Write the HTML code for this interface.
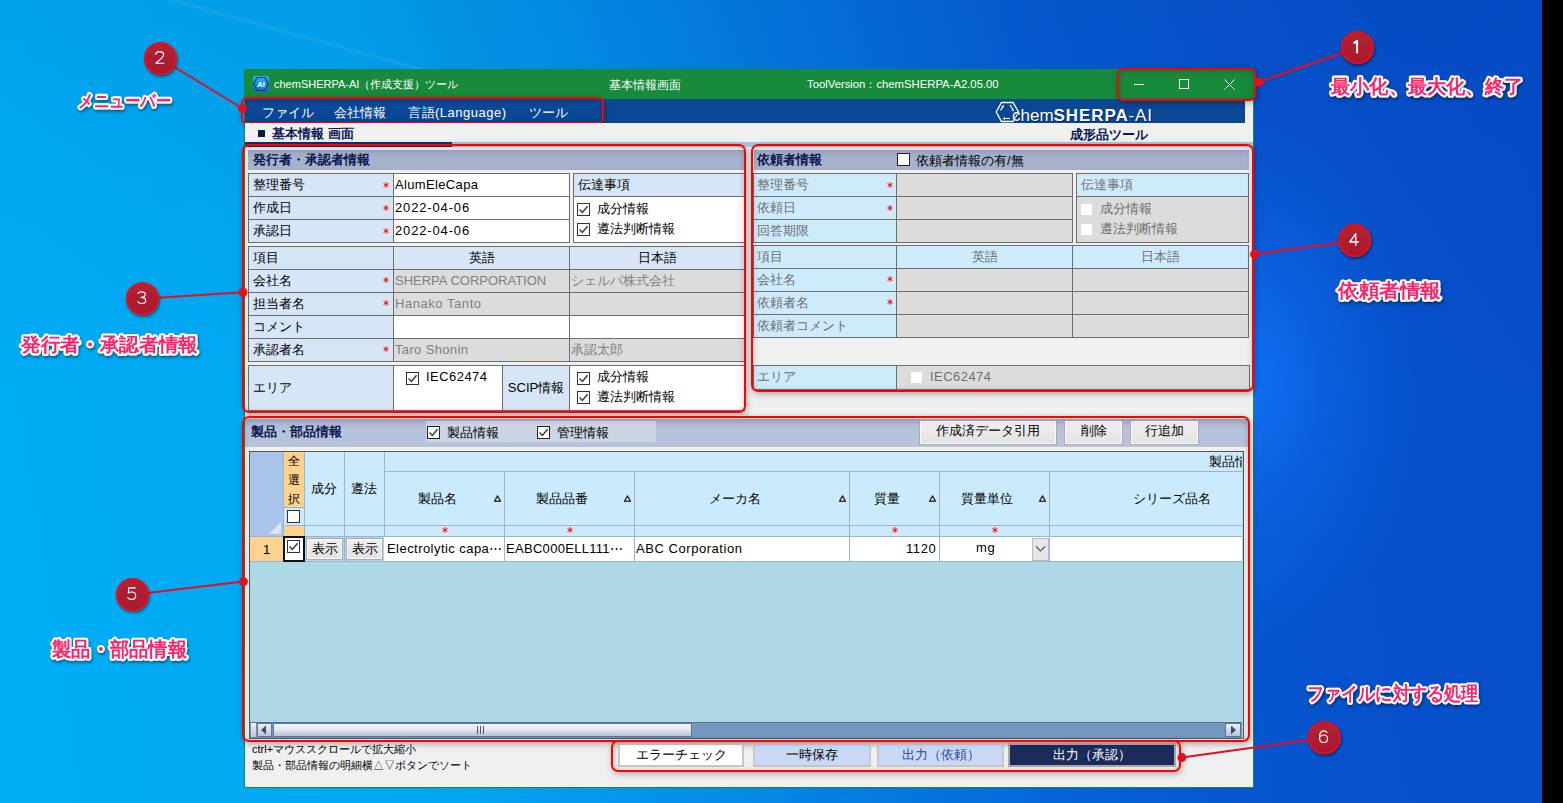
<!DOCTYPE html>
<html><head><meta charset="utf-8">
<style>
*{box-sizing:border-box;margin:0;padding:0}
html,body{width:1563px;height:803px;overflow:hidden}
body{position:relative;font-family:"Liberation Sans",sans-serif;font-size:13px;color:#000;
background:#0a8fe0}
.a{position:absolute}
#bg{left:0;top:0;width:1563px;height:803px;
background:
 radial-gradient(ellipse 170px 270px at 1250px 380px, rgba(20,120,255,.75), rgba(20,120,255,.25) 55%, rgba(20,120,255,0) 100%),
 linear-gradient(180deg, rgba(0,40,120,.08) 0px, rgba(0,40,120,0) 400px),
 linear-gradient(81deg,#00aef6 60px,#02a6f0 450px,#038fe8 700px,#0474de 920px,#065dd3 1120px,#0652cc 1330px,#054dc8 1669px);}
#ray{left:0;top:0;width:1563px;height:803px}
#blk{left:1542px;top:0;width:21px;height:803px;background:#000}
#win{left:244px;top:69px;width:1010px;height:719px;background:#f0f0f0;border:1px solid #178a3c;border-top:0}
#title{left:244px;top:69px;width:1010px;height:30px;background:#178a3c;color:#fff;font-size:12px}
#menu{left:245px;top:99px;width:1000px;height:24px;background:#0a4896;color:#fff}
.t{position:absolute;white-space:nowrap;line-height:1}
.rb{position:absolute;border:2px solid #f00;border-radius:7px;box-shadow:1px 2px 6px rgba(0,0,0,.3), inset 0 1px 6px rgba(0,0,0,.2)}
.hdr{position:absolute;height:20px;background:linear-gradient(#99a5c2,#a6b1cc 40%,#a6b1cc);color:#0a1850;font-weight:bold;font-size:13px}
.cell{position:absolute;border:1px solid #6e6e6e;overflow:hidden;white-space:nowrap;font-size:13px;line-height:21px}
.lb{background:#d6e6f6}
.lb2{background:#cdebfb;color:#707070}
.dis{background:#dcdcdc;color:#808080}
.wh{background:#fff}
.req{position:absolute;color:#e00;font-size:12px}
.cb{position:absolute;width:13px;height:13px;border:1px solid #333;background:#fff}
.cb.on::after{content:"";position:absolute;left:2px;top:0px;width:6px;height:3px;border-left:1.3px solid #444;border-bottom:1.3px solid #444;transform:translate(0,3px) rotate(-45deg)}
.cb.off{border-color:#ddd}

.btn{position:absolute;background:linear-gradient(#f0f0f0,#e2e2e2);border:1px solid #acacac;box-shadow:inset 0 0 0 1px #fafafa;text-align:center;font-size:13px;line-height:20px;white-space:nowrap}
.vl{position:absolute;width:1px;background:#9fb3cf}
.hl{position:absolute;height:1px;background:#9fb3cf}
.ht{position:absolute;top:491px;text-align:center;font-size:13px;line-height:16px;white-space:nowrap}
.tri{position:absolute;top:495px;width:0;height:0;border-left:4px solid transparent;border-right:4px solid transparent;border-bottom:7px solid #333}
.fb{position:absolute;border:2px solid #c8c8c8;text-align:center;font-size:13px;line-height:20px;white-space:nowrap}
</style></head><body>
<div id="bg" class="a"></div>
<svg id="ray" class="a" width="1563" height="803"><defs><filter id="rb"><feGaussianBlur stdDeviation="1.2"/></filter></defs><line x1="110" y1="-17" x2="700" y2="147" stroke="rgba(255,255,255,.09)" stroke-width="2.5" filter="url(#rb)"/></svg>
<div id="blk" class="a"></div>

<!-- window -->
<div id="win" class="a"></div>
<div id="title" class="a">
  <div class="a" style="left:9px;top:7px;width:16px;height:16px;background:linear-gradient(#27b4f0,#0a6fc0);border-radius:2px">
    <svg width="16" height="16" viewBox="0 0 16 16" style="position:absolute;left:0;top:0"><polygon points="4,1.5 12,1.5 15.3,8 12,14.5 4,14.5 0.7,8" fill="none" stroke="#0a3a70" stroke-width="1.2"/><text x="8" y="11" font-size="7.5" font-weight="bold" fill="#fff" text-anchor="middle" font-family="Liberation Sans">AI</text></svg>
  </div>
  <div class="t" style="left:30px;top:10px;font-size:11px">chemSHERPA-AI（作成支援）ツール</div>
  <div class="t" style="left:365px;top:10px;font-size:11.6px">基本情報画面</div>
  <div class="t" style="left:563px;top:10px;font-size:11.3px">ToolVersion：chemSHERPA-A2.05.00</div>
  <div class="a" style="left:890px;top:15px;width:10px;height:1px;background:#fff"></div>
  <div class="a" style="left:935px;top:10px;width:10px;height:10px;border:1px solid #fff"></div>
  <svg class="a" style="left:980px;top:10px" width="11" height="11"><path d="M0.5 0.5 L10.5 10.5 M10.5 0.5 L0.5 10.5" stroke="#fff" stroke-width="1"/></svg>
</div>
<div id="menu" class="a" style="font-size:13px">
  <div class="t" style="left:17px;top:7px">ファイル</div>
  <div class="t" style="left:89px;top:7px">会社情報</div>
  <div class="t" style="left:163px;top:7px;letter-spacing:0.5px">言語(Language)</div>
  <div class="t" style="left:284px;top:7px">ツール</div>
  <!-- logo -->
  <svg class="a" style="left:750px;top:2px" width="26" height="22" viewBox="0 0 26 22"><polygon points="6.5,1.5 18,1.5 23.5,11 18,20.5 6.5,20.5 1.2,11" fill="none" stroke="#fff" stroke-width="1.3"/><path d="M5.5 9.5 L8.5 4.5 M15 4 L18.5 9.5 M8 17.5 L15 17.5" stroke="#fff" stroke-width="1.2"/><path d="M6.3 5.8 L8.6 4.2 L8.4 7 Z M18.3 8 L18.6 10.5 L16.4 9.3 Z M7.5 17.5 L10 16 L10 19 Z" fill="#fff"/></svg>
  <div class="t" style="left:767px;top:8px;font-size:17px;text-shadow:1px 1px 1px rgba(0,0,40,.5)">chem<b style="letter-spacing:0.9px">SHERPA</b><span style="letter-spacing:0.8px">-AI</span></div>
</div>

<div class="rb" style="left:241px;top:97px;width:363px;height:27px;border-radius:6px"></div>
<div class="rb" style="left:1117px;top:68px;width:139px;height:33px;border-radius:6px"></div>
<!-- tab strip -->
<div class="a" style="left:245px;top:123px;width:1008px;height:19px;background:#f0f0f0"></div>
<div class="a" style="left:258px;top:130px;width:7px;height:7px;background:#0a1850"></div><div class="t" style="left:272px;top:127px;font-size:13px;font-weight:bold;color:#0a1850">基本情報 画面</div>
<div class="t" style="left:1070px;top:128px;font-size:13px;font-weight:bold;color:#0a1850">成形品ツール</div>
<div class="a" style="left:245px;top:142px;width:1008px;height:5px;background:#a9c6de"></div>
<div class="a" style="left:245px;top:142px;width:207px;height:5px;background:#0a3274"></div>


<!-- ===== Section 3: issuer ===== -->
<div class="hdr" style="left:248px;top:150px;width:497px;"><span class="t" style="left:5px;top:3px">発行者・承認者情報</span></div>
<!-- table 1 -->
<div class="cell lb" style="left:248px;top:173px;width:146px;height:24px;padding-left:4px">整理番号</div>
<div class="cell lb" style="left:248px;top:196px;width:146px;height:24px;padding-left:4px">作成日</div>
<div class="cell lb" style="left:248px;top:219px;width:146px;height:24px;padding-left:4px">承認日</div>
<svg class="a" style="left:382px;top:181px" width="8" height="8"><path d="M4 1.1V6.9M1.5 2.55L6.5 5.45M6.5 2.55L1.5 5.45" stroke="#f00" stroke-width="0.95"/></svg>
<svg class="a" style="left:382px;top:204px" width="8" height="8"><path d="M4 1.1V6.9M1.5 2.55L6.5 5.45M6.5 2.55L1.5 5.45" stroke="#f00" stroke-width="0.95"/></svg>
<svg class="a" style="left:382px;top:227px" width="8" height="8"><path d="M4 1.1V6.9M1.5 2.55L6.5 5.45M6.5 2.55L1.5 5.45" stroke="#f00" stroke-width="0.95"/></svg>
<div class="cell wh" style="left:393px;top:173px;width:177px;height:24px;padding-left:1px;letter-spacing:0.35px">AlumEleCapa</div>
<div class="cell wh" style="left:393px;top:196px;width:177px;height:24px;padding-left:1px;letter-spacing:0.85px">2022-04-06</div>
<div class="cell wh" style="left:393px;top:219px;width:177px;height:24px;padding-left:1px;letter-spacing:0.85px">2022-04-06</div>
<div class="cell lb" style="left:573px;top:173px;width:172px;height:24px;padding-left:4px">伝達事項</div>
<div class="cell wh" style="left:573px;top:196px;width:172px;height:47px"></div>
<div class="cb" style="left:577px;top:203px"><svg class="a" style="left:0;top:0" width="11" height="11"><path d="M1.6 5.4L4.3 8.4L9.6 2.3" fill="none" stroke="#333" stroke-width="1.4"/></svg></div><div class="t" style="left:597px;top:202px">成分情報</div>
<div class="cb" style="left:577px;top:223px"><svg class="a" style="left:0;top:0" width="11" height="11"><path d="M1.6 5.4L4.3 8.4L9.6 2.3" fill="none" stroke="#333" stroke-width="1.4"/></svg></div><div class="t" style="left:597px;top:222px">遵法判断情報</div>
<!-- table 2 -->
<div class="cell lb" style="left:248px;top:246px;width:146px;height:24px;padding-left:4px">項目</div>
<div class="cell lb" style="left:393px;top:246px;width:177px;height:24px;text-align:center;padding-left:0">英語</div>
<div class="cell lb" style="left:569px;top:246px;width:176px;height:24px;text-align:center">日本語</div>
<div class="cell lb" style="left:248px;top:269px;width:146px;height:24px;padding-left:4px">会社名</div>
<div class="cell lb" style="left:248px;top:292px;width:146px;height:24px;padding-left:4px">担当者名</div>
<div class="cell lb" style="left:248px;top:315px;width:146px;height:24px;padding-left:4px">コメント</div>
<div class="cell lb" style="left:248px;top:338px;width:146px;height:24px;padding-left:4px">承認者名</div>
<svg class="a" style="left:382px;top:276px" width="8" height="8"><path d="M4 1.1V6.9M1.5 2.55L6.5 5.45M6.5 2.55L1.5 5.45" stroke="#f00" stroke-width="0.95"/></svg>
<svg class="a" style="left:382px;top:299px" width="8" height="8"><path d="M4 1.1V6.9M1.5 2.55L6.5 5.45M6.5 2.55L1.5 5.45" stroke="#f00" stroke-width="0.95"/></svg>
<svg class="a" style="left:382px;top:345px" width="8" height="8"><path d="M4 1.1V6.9M1.5 2.55L6.5 5.45M6.5 2.55L1.5 5.45" stroke="#f00" stroke-width="0.95"/></svg>
<div class="cell dis" style="left:393px;top:269px;width:177px;height:24px;padding-left:1px">SHERPA CORPORATION</div>
<div class="cell dis" style="left:393px;top:292px;width:177px;height:24px;padding-left:1px;letter-spacing:0.55px">Hanako Tanto</div>
<div class="cell wh" style="left:393px;top:315px;width:177px;height:24px"></div>
<div class="cell dis" style="left:393px;top:338px;width:177px;height:24px;padding-left:1px;letter-spacing:0.35px">Taro Shonin</div>
<div class="cell dis" style="left:569px;top:269px;width:176px;height:24px;padding-left:1px">シェルパ株式会社</div>
<div class="cell dis" style="left:569px;top:292px;width:176px;height:24px"></div>
<div class="cell wh" style="left:569px;top:315px;width:176px;height:24px"></div>
<div class="cell dis" style="left:569px;top:338px;width:176px;height:24px;padding-left:1px">承認太郎</div>
<!-- area row -->
<div class="cell lb" style="left:248px;top:365px;width:146px;height:46px;padding-left:4px;line-height:44px">エリア</div>
<div class="cell wh" style="left:393px;top:365px;width:110px;height:46px"></div>
<div class="cb" style="left:406px;top:372px"><svg class="a" style="left:0;top:0" width="11" height="11"><path d="M1.6 5.4L4.3 8.4L9.6 2.3" fill="none" stroke="#333" stroke-width="1.4"/></svg></div><div class="t" style="left:426px;top:370px;letter-spacing:0.45px">IEC62474</div>
<div class="cell lb" style="left:502px;top:365px;width:68px;height:46px;line-height:44px;text-align:center">SCIP情報</div>
<div class="cell wh" style="left:569px;top:365px;width:176px;height:46px"></div>
<div class="cb" style="left:577px;top:372px"><svg class="a" style="left:0;top:0" width="11" height="11"><path d="M1.6 5.4L4.3 8.4L9.6 2.3" fill="none" stroke="#333" stroke-width="1.4"/></svg></div><div class="t" style="left:597px;top:370px">成分情報</div>
<div class="cb" style="left:577px;top:391px"><svg class="a" style="left:0;top:0" width="11" height="11"><path d="M1.6 5.4L4.3 8.4L9.6 2.3" fill="none" stroke="#333" stroke-width="1.4"/></svg></div><div class="t" style="left:597px;top:390px">遵法判断情報</div>
<div class="rb" style="left:242px;top:144px;width:504px;height:269px"></div>

<!-- ===== Section 4: requester ===== -->
<div class="hdr" style="left:754px;top:150px;width:495px;"><span class="t" style="left:3px;top:3px">依頼者情報</span>
  <div class="cb" style="left:143px;top:3px;border-color:#222"></div><span class="t" style="left:162px;top:4px;font-weight:normal;color:#000;font-size:13px">依頼者情報の有/無</span></div>
<div class="cell lb2" style="left:753px;top:173px;width:144px;height:24px;padding-left:3px">整理番号</div>
<div class="cell lb2" style="left:753px;top:196px;width:144px;height:24px;padding-left:3px">依頼日</div>
<div class="cell lb2" style="left:753px;top:219px;width:144px;height:24px;padding-left:3px">回答期限</div>
<svg class="a" style="left:886px;top:181px" width="8" height="8"><path d="M4 1.1V6.9M1.5 2.55L6.5 5.45M6.5 2.55L1.5 5.45" stroke="#f00" stroke-width="0.95"/></svg>
<svg class="a" style="left:886px;top:204px" width="8" height="8"><path d="M4 1.1V6.9M1.5 2.55L6.5 5.45M6.5 2.55L1.5 5.45" stroke="#f00" stroke-width="0.95"/></svg>
<div class="cell dis" style="left:896px;top:173px;width:177px;height:24px"></div>
<div class="cell dis" style="left:896px;top:196px;width:177px;height:24px"></div>
<div class="cell dis" style="left:896px;top:219px;width:177px;height:24px"></div>
<div class="cell lb2" style="left:1076px;top:173px;width:173px;height:24px;padding-left:4px">伝達事項</div>
<div class="cell dis" style="left:1076px;top:196px;width:173px;height:47px"></div>
<div class="cb off" style="left:1080px;top:203px"></div><div class="t" style="left:1100px;top:202px;color:#707070">成分情報</div>
<div class="cb off" style="left:1080px;top:223px"></div><div class="t" style="left:1100px;top:222px;color:#707070">遵法判断情報</div>
<div class="cell lb2" style="left:753px;top:245px;width:144px;height:24px;padding-left:3px">項目</div>
<div class="cell lb2" style="left:896px;top:245px;width:177px;height:24px;text-align:center">英語</div>
<div class="cell lb2" style="left:1072px;top:245px;width:177px;height:24px;text-align:center">日本語</div>
<div class="cell lb2" style="left:753px;top:268px;width:144px;height:24px;padding-left:3px">会社名</div>
<div class="cell lb2" style="left:753px;top:291px;width:144px;height:24px;padding-left:3px">依頼者名</div>
<div class="cell lb2" style="left:753px;top:314px;width:144px;height:24px;padding-left:3px">依頼者コメント</div>
<svg class="a" style="left:886px;top:275px" width="8" height="8"><path d="M4 1.1V6.9M1.5 2.55L6.5 5.45M6.5 2.55L1.5 5.45" stroke="#f00" stroke-width="0.95"/></svg>
<svg class="a" style="left:886px;top:298px" width="8" height="8"><path d="M4 1.1V6.9M1.5 2.55L6.5 5.45M6.5 2.55L1.5 5.45" stroke="#f00" stroke-width="0.95"/></svg>
<div class="cell dis" style="left:896px;top:268px;width:177px;height:24px"></div>
<div class="cell dis" style="left:896px;top:291px;width:177px;height:24px"></div>
<div class="cell dis" style="left:896px;top:314px;width:177px;height:24px"></div>
<div class="cell dis" style="left:1072px;top:268px;width:177px;height:24px"></div>
<div class="cell dis" style="left:1072px;top:291px;width:177px;height:24px"></div>
<div class="cell dis" style="left:1072px;top:314px;width:177px;height:24px"></div>
<div class="cell lb2" style="left:753px;top:365px;width:144px;height:25px;padding-left:3px">エリア</div>
<div class="cell dis" style="left:896px;top:365px;width:354px;height:25px"></div>
<div class="cb off" style="left:910px;top:371px"></div><div class="t" style="left:930px;top:370px;color:#707070;letter-spacing:0.45px">IEC62474</div>
<div class="rb" style="left:751px;top:144px;width:503px;height:248px"></div>


<!-- ===== Section 5: products ===== -->
<div class="a" style="left:245px;top:419px;width:1004px;height:28px;background:linear-gradient(#a4aec7,#b6c1da 35%,#b8c3dc)"></div>
<div class="t" style="left:251px;top:425px;font-size:13px;font-weight:bold;color:#0a1850">製品・部品情報</div>
<div class="a" style="left:426px;top:421px;width:230px;height:21px;background:#cdd4e4"></div>
<div class="cb" style="left:427px;top:426px;border-color:#222"><svg class="a" style="left:0;top:0" width="11" height="11"><path d="M1.6 5.4L4.3 8.4L9.6 2.3" fill="none" stroke="#333" stroke-width="1.4"/></svg></div><div class="t" style="left:447px;top:426px">製品情報</div>
<div class="cb" style="left:537px;top:426px;border-color:#222"><svg class="a" style="left:0;top:0" width="11" height="11"><path d="M1.6 5.4L4.3 8.4L9.6 2.3" fill="none" stroke="#333" stroke-width="1.4"/></svg></div><div class="t" style="left:557px;top:426px">管理情報</div>
<div class="btn" style="left:919px;top:420px;width:138px;height:25px">作成済データ引用</div>
<div class="btn" style="left:1064px;top:420px;width:59px;height:25px">削除</div>
<div class="btn" style="left:1130px;top:420px;width:69px;height:25px">行追加</div>

<!-- grid -->
<div class="a" style="left:249px;top:451px;width:995px;height:288px;background:#add8e6;border:1px solid #555;border-bottom:0"></div>
<div class="a" style="left:250px;top:452px;width:992px;height:84px;background:#cbeafc"></div>
<!-- row header col -->
<div class="a" style="left:250px;top:452px;width:33px;height:84px;background:#a8c5e9"></div>
<svg class="a" style="left:268px;top:521px" width="14" height="14"><polygon points="13,1 13,13 1,13" fill="#d8e6f6"/></svg>
<!-- select all col -->
<div class="a" style="left:283px;top:452px;width:21px;height:55px;background:#fdd18e"></div>
<div class="a" style="left:283px;top:525px;width:21px;height:11px;background:#fdd18e"></div>
<div class="t" style="left:288px;top:452px;font-size:12px;line-height:19px;white-space:normal;width:14px">全<br>選<br>択</div>
<div class="cb" style="left:287px;top:510px;border-color:#333"></div>
<!-- grid lines -->
<div class="vl" style="left:283px;top:452px;height:84px"></div>
<div class="vl" style="left:304px;top:452px;height:109px"></div>
<div class="vl" style="left:344px;top:452px;height:109px"></div>
<div class="vl" style="left:384px;top:452px;height:109px"></div>
<div class="vl" style="left:504px;top:471px;height:90px"></div>
<div class="vl" style="left:634px;top:471px;height:90px"></div>
<div class="vl" style="left:849px;top:471px;height:90px"></div>
<div class="vl" style="left:939px;top:471px;height:90px"></div>
<div class="vl" style="left:1049px;top:471px;height:90px"></div>
<div class="hl" style="left:384px;top:471px;width:858px"></div>
<div class="hl" style="left:283px;top:525px;width:959px"></div>
<div class="hl" style="left:283px;top:507px;width:21px"></div>
<div class="hl" style="left:250px;top:536px;width:992px"></div>
<div class="hl" style="left:250px;top:561px;width:992px;background:#9fb3cf"></div>
<!-- headers -->
<div class="t" style="left:311px;top:482px">成分</div>
<div class="t" style="left:351px;top:482px">遵法</div>
<div class="a" style="left:1150px;top:452px;width:92px;height:19px;overflow:hidden"><div class="t" style="left:59px;top:3px;">製品情報</div></div>
<div class="ht" style="left:384px;width:106px">製品名</div>
<div class="ht" style="left:504px;width:116px">製品品番</div>
<div class="ht" style="left:634px;width:201px">メーカ名</div>
<div class="ht" style="left:849px;width:76px">質量</div>
<div class="ht" style="left:939px;width:96px">質量単位</div>
<div class="ht" style="left:1049px;width:245px">シリーズ品名</div>
<svg class="a" style="left:494px;top:495px" width="8" height="8"><polygon points="3.5,0.9 6.4,6.2 0.6,6.2" fill="#f4f8fb" stroke="#333" stroke-width="1.4" stroke-linejoin="round"/></svg>
<svg class="a" style="left:624px;top:495px" width="8" height="8"><polygon points="3.5,0.9 6.4,6.2 0.6,6.2" fill="#f4f8fb" stroke="#333" stroke-width="1.4" stroke-linejoin="round"/></svg>
<svg class="a" style="left:839px;top:495px" width="8" height="8"><polygon points="3.5,0.9 6.4,6.2 0.6,6.2" fill="#f4f8fb" stroke="#333" stroke-width="1.4" stroke-linejoin="round"/></svg>
<svg class="a" style="left:929px;top:495px" width="8" height="8"><polygon points="3.5,0.9 6.4,6.2 0.6,6.2" fill="#f4f8fb" stroke="#333" stroke-width="1.4" stroke-linejoin="round"/></svg>
<svg class="a" style="left:1039px;top:495px" width="8" height="8"><polygon points="3.5,0.9 6.4,6.2 0.6,6.2" fill="#f4f8fb" stroke="#333" stroke-width="1.4" stroke-linejoin="round"/></svg>
<svg class="a" style="left:441px;top:526px" width="8" height="8"><path d="M4 1.1V6.9M1.5 2.55L6.5 5.45M6.5 2.55L1.5 5.45" stroke="#f00" stroke-width="0.95"/></svg>
<svg class="a" style="left:566px;top:526px" width="8" height="8"><path d="M4 1.1V6.9M1.5 2.55L6.5 5.45M6.5 2.55L1.5 5.45" stroke="#f00" stroke-width="0.95"/></svg>
<svg class="a" style="left:891px;top:526px" width="8" height="8"><path d="M4 1.1V6.9M1.5 2.55L6.5 5.45M6.5 2.55L1.5 5.45" stroke="#f00" stroke-width="0.95"/></svg>
<svg class="a" style="left:991px;top:526px" width="8" height="8"><path d="M4 1.1V6.9M1.5 2.55L6.5 5.45M6.5 2.55L1.5 5.45" stroke="#f00" stroke-width="0.95"/></svg>
<!-- data row -->
<div class="a" style="left:250px;top:537px;width:33px;height:24px;background:#fdd18e"></div>
<div class="t" style="left:263px;top:543px">1</div>
<div class="a" style="left:384px;top:537px;width:858px;height:24px;background:#fff"></div>
<div class="a" style="left:283px;top:536px;width:22px;height:26px;background:#fff;border:2px solid #111"></div>
<div class="cb" style="left:287px;top:540px;border-color:#333"><svg class="a" style="left:0;top:0" width="11" height="11"><path d="M1.6 5.4L4.3 8.4L9.6 2.3" fill="none" stroke="#333" stroke-width="1.4"/></svg></div>
<div class="btn" style="left:306px;top:538px;width:37px;height:22px;font-size:13px;line-height:19px">表示</div>
<div class="btn" style="left:346px;top:538px;width:37px;height:22px;font-size:13px;line-height:19px">表示</div>
<div class="vl" style="left:504px;top:537px;height:24px"></div>
<div class="vl" style="left:634px;top:537px;height:24px"></div>
<div class="vl" style="left:849px;top:537px;height:24px"></div>
<div class="vl" style="left:939px;top:537px;height:24px"></div>
<div class="vl" style="left:1049px;top:537px;height:24px"></div>
<div class="t" style="left:387px;top:542px;letter-spacing:0.45px">Electrolytic capa⋯</div>
<div class="t" style="left:506px;top:542px;letter-spacing:0.3px">EABC000ELL111⋯</div>
<div class="t" style="left:636px;top:542px;letter-spacing:0.55px">ABC Corporation</div>
<div class="t" style="left:906px;top:542px;letter-spacing:0.6px">1120</div>
<div class="t" style="left:976px;top:541px;letter-spacing:0.6px">mg</div>
<div class="a" style="left:1032px;top:538px;width:17px;height:23px;background:#e6e6e6;border:1px solid #bbb"></div>
<svg class="a" style="left:1035px;top:545px" width="11" height="8"><path d="M1 1.5 L5.5 6 L10 1.5" fill="none" stroke="#555" stroke-width="1.1"/></svg>
<!-- scrollbar -->
<div class="a" style="left:250px;top:722px;width:992px;height:17px;background:#7398c0;border-top:1px solid #5a6f90;border-bottom:1px solid #4d5d78"></div>
<div class="a" style="left:251px;top:723px;width:5px;height:14px;background:linear-gradient(#eef2f8,#b9c4d6)"></div>
<div class="a" style="left:257px;top:723px;width:15px;height:14px;background:linear-gradient(#eef2f8,#b9c4d6);border:1px solid #60749a"></div>
<svg class="a" style="left:260px;top:725px" width="8" height="10"><polygon points="6,0.5 6,9.5 1,5" fill="#3e4e6c"/></svg>
<div class="a" style="left:273px;top:723px;width:419px;height:14px;background:linear-gradient(#f3f5f9,#e3e8f0 45%,#b7c2d4);border:1px solid #60749a;border-radius:1px"></div>
<svg class="a" style="left:476px;top:726px" width="10" height="8"><path d="M1.5 0 V8 M4.5 0 V8 M7.5 0 V8" stroke="#555" stroke-width="1"/></svg>
<div class="a" style="left:1225px;top:723px;width:16px;height:14px;background:linear-gradient(#eef2f8,#b9c4d6);border:1px solid #60749a"></div>
<svg class="a" style="left:1229px;top:725px" width="8" height="10"><polygon points="2,0.5 2,9.5 7,5" fill="#3e4e6c"/></svg>
<div class="rb" style="left:242px;top:416px;width:1008px;height:326px"></div>

<!-- footer -->
<div class="t" style="left:252px;top:744px;font-size:11px">ctrl+マウススクロールで拡大縮小</div>
<div class="t" style="left:252px;top:760px;font-size:11px">製品・部品情報の明細横△▽ボタンでソート</div>
<div class="fb" style="left:618px;top:743px;width:126px;height:24px;background:#fff">エラーチェック</div>
<div class="fb" style="left:753px;top:743px;width:118px;height:24px;background:#c9d8f5">一時保存</div>
<div class="fb" style="left:877px;top:743px;width:127px;height:24px;background:#c9d8f5;color:#2a4aa0">出力（依頼）</div>
<div class="fb" style="left:1008px;top:743px;width:168px;height:24px;background:#1c2b5a;color:#fff;border-color:#aaa">出力（承認）</div>
<div class="rb" style="left:611px;top:740px;width:570px;height:32px"></div>


<!-- annotations -->
<svg class="a" style="left:0;top:0" width="1563" height="803" viewBox="0 0 1563 803">
<defs><filter id="sh" x="-30%" y="-30%" width="160%" height="160%"><feGaussianBlur in="SourceAlpha" stdDeviation="1.6"/><feOffset dx="1" dy="2"/><feComponentTransfer><feFuncA type="linear" slope="0.45"/></feComponentTransfer><feMerge><feMergeNode/><feMergeNode in="SourceGraphic"/></feMerge></filter>
<linearGradient id="cg" x1="0" y1="0" x2="0" y2="1"><stop offset="0" stop-color="#b02434"/><stop offset="1" stop-color="#a8182c"/></linearGradient></defs>
<line x1="1357.5" y1="47.5" x2="1259" y2="82" stroke="#e4101e" stroke-width="2"/>
<circle cx="1259" cy="82" r="4.5" fill="#e4101e"/>
<line x1="160.5" y1="58.5" x2="242.5" y2="108.5" stroke="#e4101e" stroke-width="2"/>
<circle cx="242.5" cy="108.5" r="4.5" fill="#e4101e"/>
<line x1="142.5" y1="298.8" x2="243" y2="292.3" stroke="#e4101e" stroke-width="2"/>
<circle cx="243" cy="292.3" r="4.5" fill="#e4101e"/>
<line x1="1354.6" y1="240.4" x2="1254.6" y2="254.2" stroke="#e4101e" stroke-width="2"/>
<circle cx="1254.6" cy="254.2" r="4.5" fill="#e4101e"/>
<line x1="132.5" y1="594.7" x2="243.4" y2="581.6" stroke="#e4101e" stroke-width="2"/>
<circle cx="243.4" cy="581.6" r="4.5" fill="#e4101e"/>
<line x1="1324.3" y1="737.8" x2="1181.9" y2="757.6" stroke="#e4101e" stroke-width="2"/>
<circle cx="1181.9" cy="757.6" r="4.5" fill="#e4101e"/>
<g filter="url(#sh)"><circle cx="1357.5" cy="47.5" r="15.5" fill="url(#cg)" stroke="#e4101e" stroke-width="2.2"/></g>
<path transform="translate(1351.7,39.9)" d="M2.6 3.0 L5.4 0.8 L5.4 12.6" fill="none" stroke="#fff" stroke-width="2.0" stroke-linecap="round" stroke-linejoin="round"/>
<g filter="url(#sh)"><circle cx="160.5" cy="58.5" r="15.5" fill="url(#cg)" stroke="#e4101e" stroke-width="2.2"/></g>
<path transform="translate(154.7,50.9)" d="M1.1 3.4 C1.1 1.6 2.7 0.7 5 0.7 C7.4 0.7 8.9 1.9 8.9 3.8 C8.9 6 6.6 7.6 1.1 12.3 H9.2" fill="none" stroke="#fff" stroke-width="1.15" stroke-linecap="round" stroke-linejoin="round"/>
<g filter="url(#sh)"><circle cx="142.5" cy="298.8" r="15.5" fill="url(#cg)" stroke="#e4101e" stroke-width="2.2"/></g>
<path transform="translate(136.7,291.2)" d="M1.3 2.3 C2 1.1 3.3 0.7 5 0.7 C7.3 0.7 8.6 1.8 8.6 3.4 C8.6 5.2 7.2 6.2 4.3 6.2 C7.6 6.2 9 7.4 9 9.3 C9 11.3 7.4 12.3 5 12.3 C3 12.3 1.7 11.8 1 10.4" fill="none" stroke="#fff" stroke-width="1.15" stroke-linecap="round" stroke-linejoin="round"/>
<g filter="url(#sh)"><circle cx="1354.6" cy="240.4" r="15.5" fill="url(#cg)" stroke="#e4101e" stroke-width="2.2"/></g>
<path transform="translate(1348.8,232.8)" d="M7 12.6 V0.9 L0.9 9.2 H9.6" fill="none" stroke="#fff" stroke-width="1.3" stroke-linecap="round" stroke-linejoin="round"/>
<g filter="url(#sh)"><circle cx="132.5" cy="594.7" r="15.5" fill="url(#cg)" stroke="#e4101e" stroke-width="2.2"/></g>
<path transform="translate(126.7,587.1)" d="M8.6 0.8 H2.1 L1.6 6 C2.5 5.2 3.6 4.9 5 4.9 C7.5 4.9 9 6.4 9 8.6 C9 11 7.4 12.3 5 12.3 C3 12.3 1.7 11.8 1 10.4" fill="none" stroke="#fff" stroke-width="1.15" stroke-linecap="round" stroke-linejoin="round"/>
<g filter="url(#sh)"><circle cx="1324.3" cy="737.8" r="15.5" fill="url(#cg)" stroke="#e4101e" stroke-width="2.2"/></g>
<path transform="translate(1318.5,730.2)" d="M8.5 2.2 C7.8 1.1 6.6 0.7 5.3 0.7 C2.4 0.7 1 3 1 7 C1 10.6 2.5 12.3 5 12.3 C7.4 12.3 9 10.8 9 8.5 C9 6.3 7.5 4.8 5.2 4.8 C3.2 4.8 1.7 5.8 1 7.5" fill="none" stroke="#fff" stroke-width="1.15" stroke-linecap="round" stroke-linejoin="round"/>
<text x="78" y="106.5" font-family="Liberation Sans" font-weight="bold" font-size="17.5" fill="#ff2468" stroke="#fff" stroke-width="4.2" stroke-linejoin="round" paint-order="stroke" textLength="93" lengthAdjust="spacingAndGlyphs" filter="url(#sh)">メニューバー</text>
<text x="1331" y="92.5" font-family="Liberation Sans" font-weight="bold" font-size="19.3" fill="#ff2468" stroke="#fff" stroke-width="4.2" stroke-linejoin="round" paint-order="stroke" textLength="192" lengthAdjust="spacingAndGlyphs" filter="url(#sh)">最小化、最大化、終了</text>
<text x="21" y="350.5" font-family="Liberation Sans" font-weight="bold" font-size="19.3" fill="#ff2468" stroke="#fff" stroke-width="4.2" stroke-linejoin="round" paint-order="stroke" textLength="177" lengthAdjust="spacingAndGlyphs" filter="url(#sh)">発行者・承認者情報</text>
<text x="1338" y="296.5" font-family="Liberation Sans" font-weight="bold" font-size="19.3" fill="#ff2468" stroke="#fff" stroke-width="4.2" stroke-linejoin="round" paint-order="stroke" textLength="103" lengthAdjust="spacingAndGlyphs" filter="url(#sh)">依頼者情報</text>
<text x="52" y="655.5" font-family="Liberation Sans" font-weight="bold" font-size="20.2" fill="#ff2468" stroke="#fff" stroke-width="4.2" stroke-linejoin="round" paint-order="stroke" textLength="135" lengthAdjust="spacingAndGlyphs" filter="url(#sh)">製品・部品情報</text>
<text x="1307" y="699.5" font-family="Liberation Sans" font-weight="bold" font-size="19.3" fill="#ff2468" stroke="#fff" stroke-width="4.2" stroke-linejoin="round" paint-order="stroke" textLength="171" lengthAdjust="spacingAndGlyphs" filter="url(#sh)">ファイルに対する処理</text>
</svg>
</body></html>
